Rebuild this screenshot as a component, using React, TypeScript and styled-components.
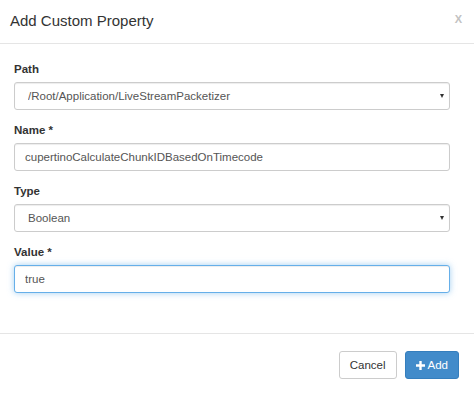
import React from 'react';
import styled, { createGlobalStyle } from 'styled-components';

const GlobalStyle = createGlobalStyle`
  html, body {
    margin: 0;
    padding: 0;
    background: #fff;
  }
  body {
    font-family: "Liberation Sans", Arial, sans-serif;
    color: #333;
  }
`;

const Dialog = styled.div`
  width: 474px;
  height: 393px;
  background: #fff;
  display: flex;
  flex-direction: column;
`;

const Header = styled.div`
  display: flex;
  align-items: flex-start;
  justify-content: space-between;
  padding: 8px 12px 10px 10px;
  border-bottom: 1px solid #e5e5e5;
`;

const Title = styled.h4`
  margin: 0;
  font-size: 15px;
  line-height: 25px;
  font-weight: normal;
  color: #333;
`;

const Close = styled.button`
  border: 0;
  background: none;
  padding: 0;
  margin-top: 4px;
  font-family: "Liberation Sans", Arial, sans-serif;
  font-size: 11px;
  line-height: 15px;
  font-weight: bold;
  color: #c2c2c2;
  cursor: pointer;
`;

const Body = styled.div`
  padding: 18px 24px 14px 14px;
  flex: 1;
`;

const Group = styled.div`
  margin-bottom: 13px;
`;

const Label = styled.label`
  display: block;
  font-size: 11.5px;
  line-height: 15px;
  font-weight: bold;
  color: #333;
  margin-bottom: 5px;
`;

const Field = styled.input<{ $focused?: boolean }>`
  display: block;
  box-sizing: border-box;
  width: 100%;
  height: 28px;
  padding: 0 10px;
  font-family: "Liberation Sans", Arial, sans-serif;
  font-size: 11.5px;
  color: #555;
  background: #fff;
  border: 1px solid ${(p) => (p.$focused ? '#66afe9' : '#ccc')};
  border-radius: 3px;
  outline: none;
  box-shadow: ${(p) =>
    p.$focused
      ? 'inset 0 1px 1px rgba(0,0,0,.075), 0 0 6px rgba(102,175,233,.6)'
      : 'inset 0 1px 1px rgba(0,0,0,.075)'};
`;

const SelectWrap = styled.div`
  position: relative;

  &::after {
    content: '';
    position: absolute;
    right: 6px;
    top: 12px;
    border-left: 2.5px solid transparent;
    border-right: 2.5px solid transparent;
    border-top: 4px solid #333;
    pointer-events: none;
  }
`;

const Select = styled.select`
  display: block;
  box-sizing: border-box;
  width: 100%;
  height: 28px;
  padding: 0 20px 0 13px;
  font-family: "Liberation Sans", Arial, sans-serif;
  font-size: 11.5px;
  color: #555;
  background: #fff;
  border: 1px solid #ccc;
  border-radius: 3px;
  outline: none;
  appearance: none;
  -webkit-appearance: none;
  box-shadow: inset 0 1px 1px rgba(0,0,0,.075);
`;

const Footer = styled.div`
  display: flex;
  justify-content: flex-end;
  gap: 8px;
  padding: 17px 15px 14px;
  border-top: 1px solid #e5e5e5;
`;

const Button = styled.button<{ $primary?: boolean }>`
  display: inline-flex;
  align-items: center;
  gap: 3px;
  height: 28px;
  padding: 0 10px;
  font-family: "Liberation Sans", Arial, sans-serif;
  font-size: 11.5px;
  border-radius: 3px;
  cursor: pointer;
  color: ${(p) => (p.$primary ? '#fff' : '#333')};
  background: ${(p) => (p.$primary ? '#428bca' : '#fff')};
  border: 1px solid ${(p) => (p.$primary ? '#357ebd' : '#ccc')};
`;

const PlusIcon = () => (
  <svg width="9" height="9" viewBox="0 0 9 9" aria-hidden="true">
    <path d="M3.3 0h2.4v3.3H9v2.4H5.7V9H3.3V5.7H0V3.3h3.3z" fill="#fff" />
  </svg>
);

const App: React.FC = () => {
  const [path, setPath] = React.useState('/Root/Application/LiveStreamPacketizer');
  const [name, setName] = React.useState('cupertinoCalculateChunkIDBasedOnTimecode');
  const [type, setType] = React.useState('Boolean');
  const [value, setValue] = React.useState('true');

  return (
    <>
      <GlobalStyle />
      <Dialog>
        <Header>
          <Title>Add Custom Property</Title>
          <Close>X</Close>
        </Header>
        <Body>
          <Group>
            <Label>Path</Label>
            <SelectWrap>
              <Select value={path} onChange={(e) => setPath(e.target.value)}>
                <option>/Root/Application/LiveStreamPacketizer</option>
                <option>/Root/Application</option>
              </Select>
            </SelectWrap>
          </Group>
          <Group>
            <Label>Name *</Label>
            <Field value={name} onChange={(e) => setName(e.target.value)} />
          </Group>
          <Group>
            <Label>Type</Label>
            <SelectWrap>
              <Select value={type} onChange={(e) => setType(e.target.value)}>
                <option>Boolean</option>
                <option>Integer</option>
                <option>Long</option>
                <option>String</option>
              </Select>
            </SelectWrap>
          </Group>
          <Group>
            <Label>Value *</Label>
            <Field $focused value={value} onChange={(e) => setValue(e.target.value)} />
          </Group>
        </Body>
        <Footer>
          <Button>Cancel</Button>
          <Button $primary>
            <PlusIcon />
            Add
          </Button>
        </Footer>
      </Dialog>
    </>
  );
};

export default App;
